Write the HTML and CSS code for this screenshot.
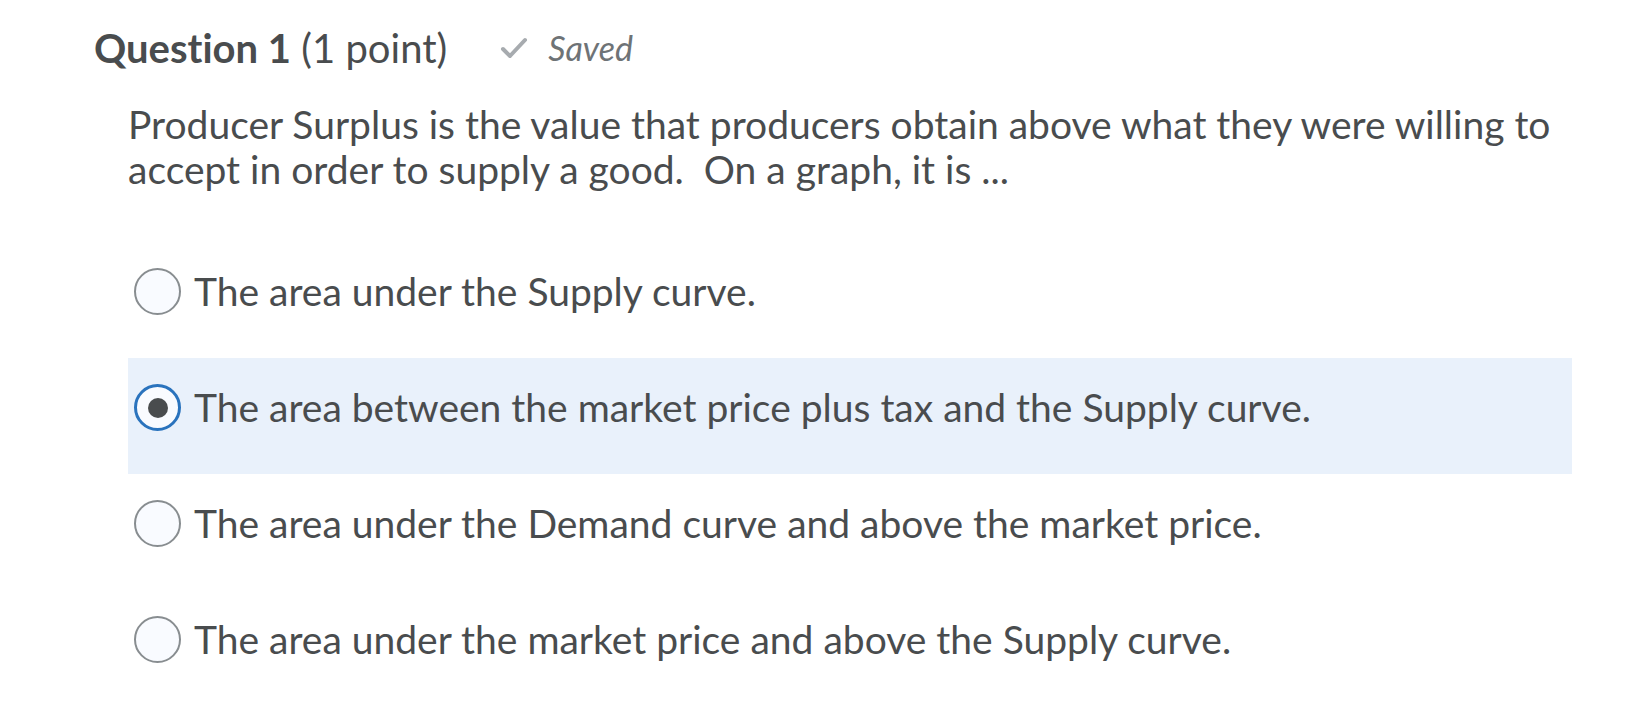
FILE: index.html
```html
<!DOCTYPE html>
<html lang="en">
<head>
<meta charset="utf-8">
<title>Question 1</title>
<link rel="stylesheet" href="styles.css">
</head>
<body>
<div class="question">
  <div class="q-header">
    <h2 class="q-title"><strong>Question 1</strong> <span class="q-points">(1 point)</span></h2>
    <div class="q-saved">
      <svg class="check" viewBox="0 0 28 22" width="28" height="22" aria-hidden="true">
        <path d="M3 12 L10 19 L25 3" fill="none" stroke="#a7abaf" stroke-width="4" stroke-linecap="round" stroke-linejoin="round"/>
      </svg>
      <span class="saved-text">Saved</span>
    </div>
  </div>
  <p class="q-text">Producer Surplus is the value that producers obtain above what they were willing to accept in order to supply a good.&nbsp; On a graph, it is ...</p>
  <div class="options">
    <label class="option"><span class="radio"></span><span class="opt-text">The area under the Supply curve.</span></label>
    <label class="option selected"><span class="radio"><span class="dot"></span></span><span class="opt-text">The area between the market price plus tax and the Supply curve.</span></label>
    <label class="option"><span class="radio"></span><span class="opt-text">The area under the Demand curve and above the market price.</span></label>
    <label class="option"><span class="radio"></span><span class="opt-text">The area under the market price and above the Supply curve.</span></label>
  </div>
</div>
</body>
</html>
```

FILE: styles.css
```css
html, body {
  margin: 0;
  padding: 0;
  background: #ffffff;
}

body {
  font-family: Lato, "Open Sans", "Liberation Sans", sans-serif;
  color: #494c4e;
  font-variant-ligatures: no-common-ligatures;
}

.question {
  padding: 24px 0 0 94px;
}

.q-header {
  display: flex;
  align-items: center;
}

.q-title {
  margin: 0;
  font-size: 40px;
  line-height: 48px;
  font-weight: 400;
}

.q-title strong {
  font-weight: 700;
}

.q-saved {
  display: flex;
  align-items: center;
  margin-left: 53px;
  gap: 20px;
}

.check {
  display: block;
}

.saved-text {
  font-style: italic;
  font-size: 34px;
  line-height: 40px;
  color: #6e7376;
}

.q-text {
  margin: 30px 0 0 34px;
  width: 1440px;
  font-size: 39px;
  line-height: 45px;
}

.options {
  margin: 50px 0 0 34px;
  width: 1444px;
}

.option {
  display: flex;
  align-items: flex-start;
  height: 116px;
  box-sizing: border-box;
  padding: 26px 0 0 6px;
}

.option.selected {
  background: #e9f1fb;
}

.radio {
  flex: none;
  width: 47px;
  height: 47px;
  box-sizing: border-box;
  border: 2px solid #888d90;
  border-radius: 50%;
  background: #f9fbff;
  display: flex;
  align-items: center;
  justify-content: center;
}

.option.selected .radio {
  border: 3px solid #2a73bd;
}

.dot {
  width: 20px;
  height: 20px;
  border-radius: 50%;
  background: #494c4e;
}

.opt-text {
  margin-left: 13px;
  font-size: 39px;
  line-height: 47px;
}
```
